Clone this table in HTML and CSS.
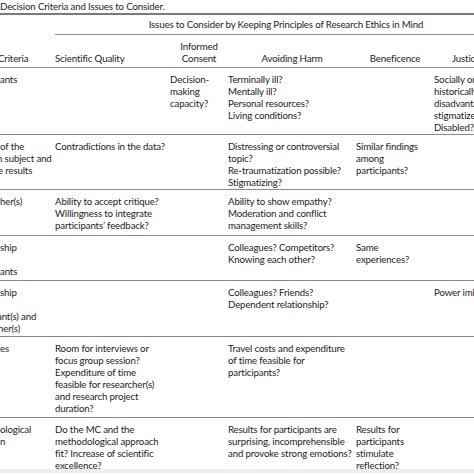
FILE: index.html
```html
<!DOCTYPE html>
<html lang="en">
<head>
<meta charset="utf-8">
<title>Decision Criteria and Issues to Consider</title>
<link rel="stylesheet" href="styles.css">
</head>
<body>
<div class="page">
  <div class="title">Decision Criteria and Issues to Consider.</div>

  <div class="span-row">
    <div class="span-cell">Issues to Consider by Keeping Principles of Research Ethics in Mind</div>
  </div>

  <div class="grid head-row">
    <div class="hcell crit">Criteria</div>
    <div class="hcell left">Scientific Quality</div>
    <div class="hcell">Informed<br>Consent</div>
    <div class="hcell">Avoiding Harm</div>
    <div class="hcell">Beneficence</div>
    <div class="hcell just">Justice</div>
  </div>

  <div class="grid row r1">
    <div class="cell">ants</div>
    <div class="cell"></div>
    <div class="cell">Decision-<br>making<br>capacity?</div>
    <div class="cell">Terminally ill?<br>Mentally ill?<br>Personal resources?<br>Living conditions?</div>
    <div class="cell"></div>
    <div class="cell">Socially or<br>historically<br>disadvantaged?<br>stigmatized?<br>Disabled?</div>
  </div>

  <div class="grid row r2">
    <div class="cell">of the<br><span class="cut">h</span> subject and<br><span class="cut2">e</span> results</div>
    <div class="cell">Contradictions in the data?</div>
    <div class="cell"></div>
    <div class="cell">Distressing or controversial<br>topic?<br>Re-traumatization possible?<br>Stigmatizing?</div>
    <div class="cell">Similar findings<br>among<br>participants?</div>
    <div class="cell"></div>
  </div>

  <div class="grid row r3">
    <div class="cell">her(s)</div>
    <div class="cell">Ability to accept critique?<br>Willingness to integrate<br>participants’ feedback?</div>
    <div class="cell"></div>
    <div class="cell">Ability to show empathy?<br>Moderation and conflict<br>management skills?</div>
    <div class="cell"></div>
    <div class="cell"></div>
  </div>

  <div class="grid row r4">
    <div class="cell">ship<br><br>ants</div>
    <div class="cell"></div>
    <div class="cell"></div>
    <div class="cell">Colleagues? Competitors?<br>Knowing each other?</div>
    <div class="cell">Same<br>experiences?</div>
    <div class="cell"></div>
  </div>

  <div class="grid row r5">
    <div class="cell">ship<br><br><span class="cut">a</span>nt(s) and<br><span class="cut2">h</span>er(s)</div>
    <div class="cell"></div>
    <div class="cell"></div>
    <div class="cell">Colleagues? Friends?<br>Dependent relationship?</div>
    <div class="cell"></div>
    <div class="cell">Power imbalance?</div>
  </div>

  <div class="grid row r6">
    <div class="cell">es</div>
    <div class="cell">Room for interviews or<br>focus group session?<br>Expenditure of time<br>feasible for researcher(s)<br>and research project<br>duration?</div>
    <div class="cell"></div>
    <div class="cell">Travel costs and expenditure<br>of time feasible for<br>participants?</div>
    <div class="cell"></div>
    <div class="cell"></div>
  </div>

  <div class="grid row r7">
    <div class="cell">ological<br>n</div>
    <div class="cell">Do the MC and the<br>methodological approach<br>fit? Increase of scientific<br>excellence?</div>
    <div class="cell"></div>
    <div class="cell">Results for participants are<br>surprising, incomprehensible<br>and provoke strong emotions?</div>
    <div class="cell">Results for<br>participants<br>stimulate<br>reflection?</div>
    <div class="cell"></div>
  </div>

  <div class="band"></div>
</div>
</body>
</html>
```

FILE: styles.css
```css
html, body {
  margin: 0;
  padding: 0;
}

body {
  width: 474px;
  height: 474px;
  overflow: hidden;
  background: #ffffff;
  color: #222222;
  font-family: "Gill Sans", "Gill Sans MT", Lato, "DejaVu Sans", sans-serif;
  font-size: 9.7px;
  letter-spacing: -0.15px;
  line-height: 12px;
}

.page {
  width: 517px;
}

.title {
  height: 15px;
  padding-top: 1px;
  box-sizing: border-box;
  line-height: 11px;
  white-space: nowrap;
  border-bottom: 2px solid #7a7a7a;
}

.span-row {
  display: grid;
  grid-template-columns: 55px 1fr;
  height: 20px;
}

.span-cell {
  grid-column: 2;
  border-bottom: 1px solid #8a8a8a;
  text-align: center;
  line-height: 19px;
  white-space: nowrap;
}

.grid {
  display: grid;
  grid-template-columns: 55px 115px 58px 128px 78px 83px;
}

.head-row {
  height: 33px;
  box-sizing: border-box;
  border-bottom: 1px solid #8a8a8a;
  padding-bottom: 3px;
}

.hcell {
  align-self: end;
  text-align: center;
  white-space: nowrap;
}

.hcell.left {
  text-align: left;
}

.hcell.crit {
  text-align: left;
  margin-left: -2px;
}

.hcell.just {
  text-align: left;
  padding-left: 18px;
}

.row {
  padding-top: 5px;
  padding-bottom: 1px;
  border-bottom: 1px solid #8a8a8a;
}

.cell {
  white-space: nowrap;
}

.r3 { padding-bottom: 4px; }
.r4 { padding-bottom: 3px; }
.r5 { padding-bottom: 2px; }
.r6 { padding-bottom: 3px; }

.r7 {
  height: 51px;
  box-sizing: border-box;
  border-bottom: none;
}

.cut {
  margin-left: -3px;
}

.cut2 {
  margin-left: -2px;
}

.band {
  height: 4px;
  background: #eeeeee;
}
```
